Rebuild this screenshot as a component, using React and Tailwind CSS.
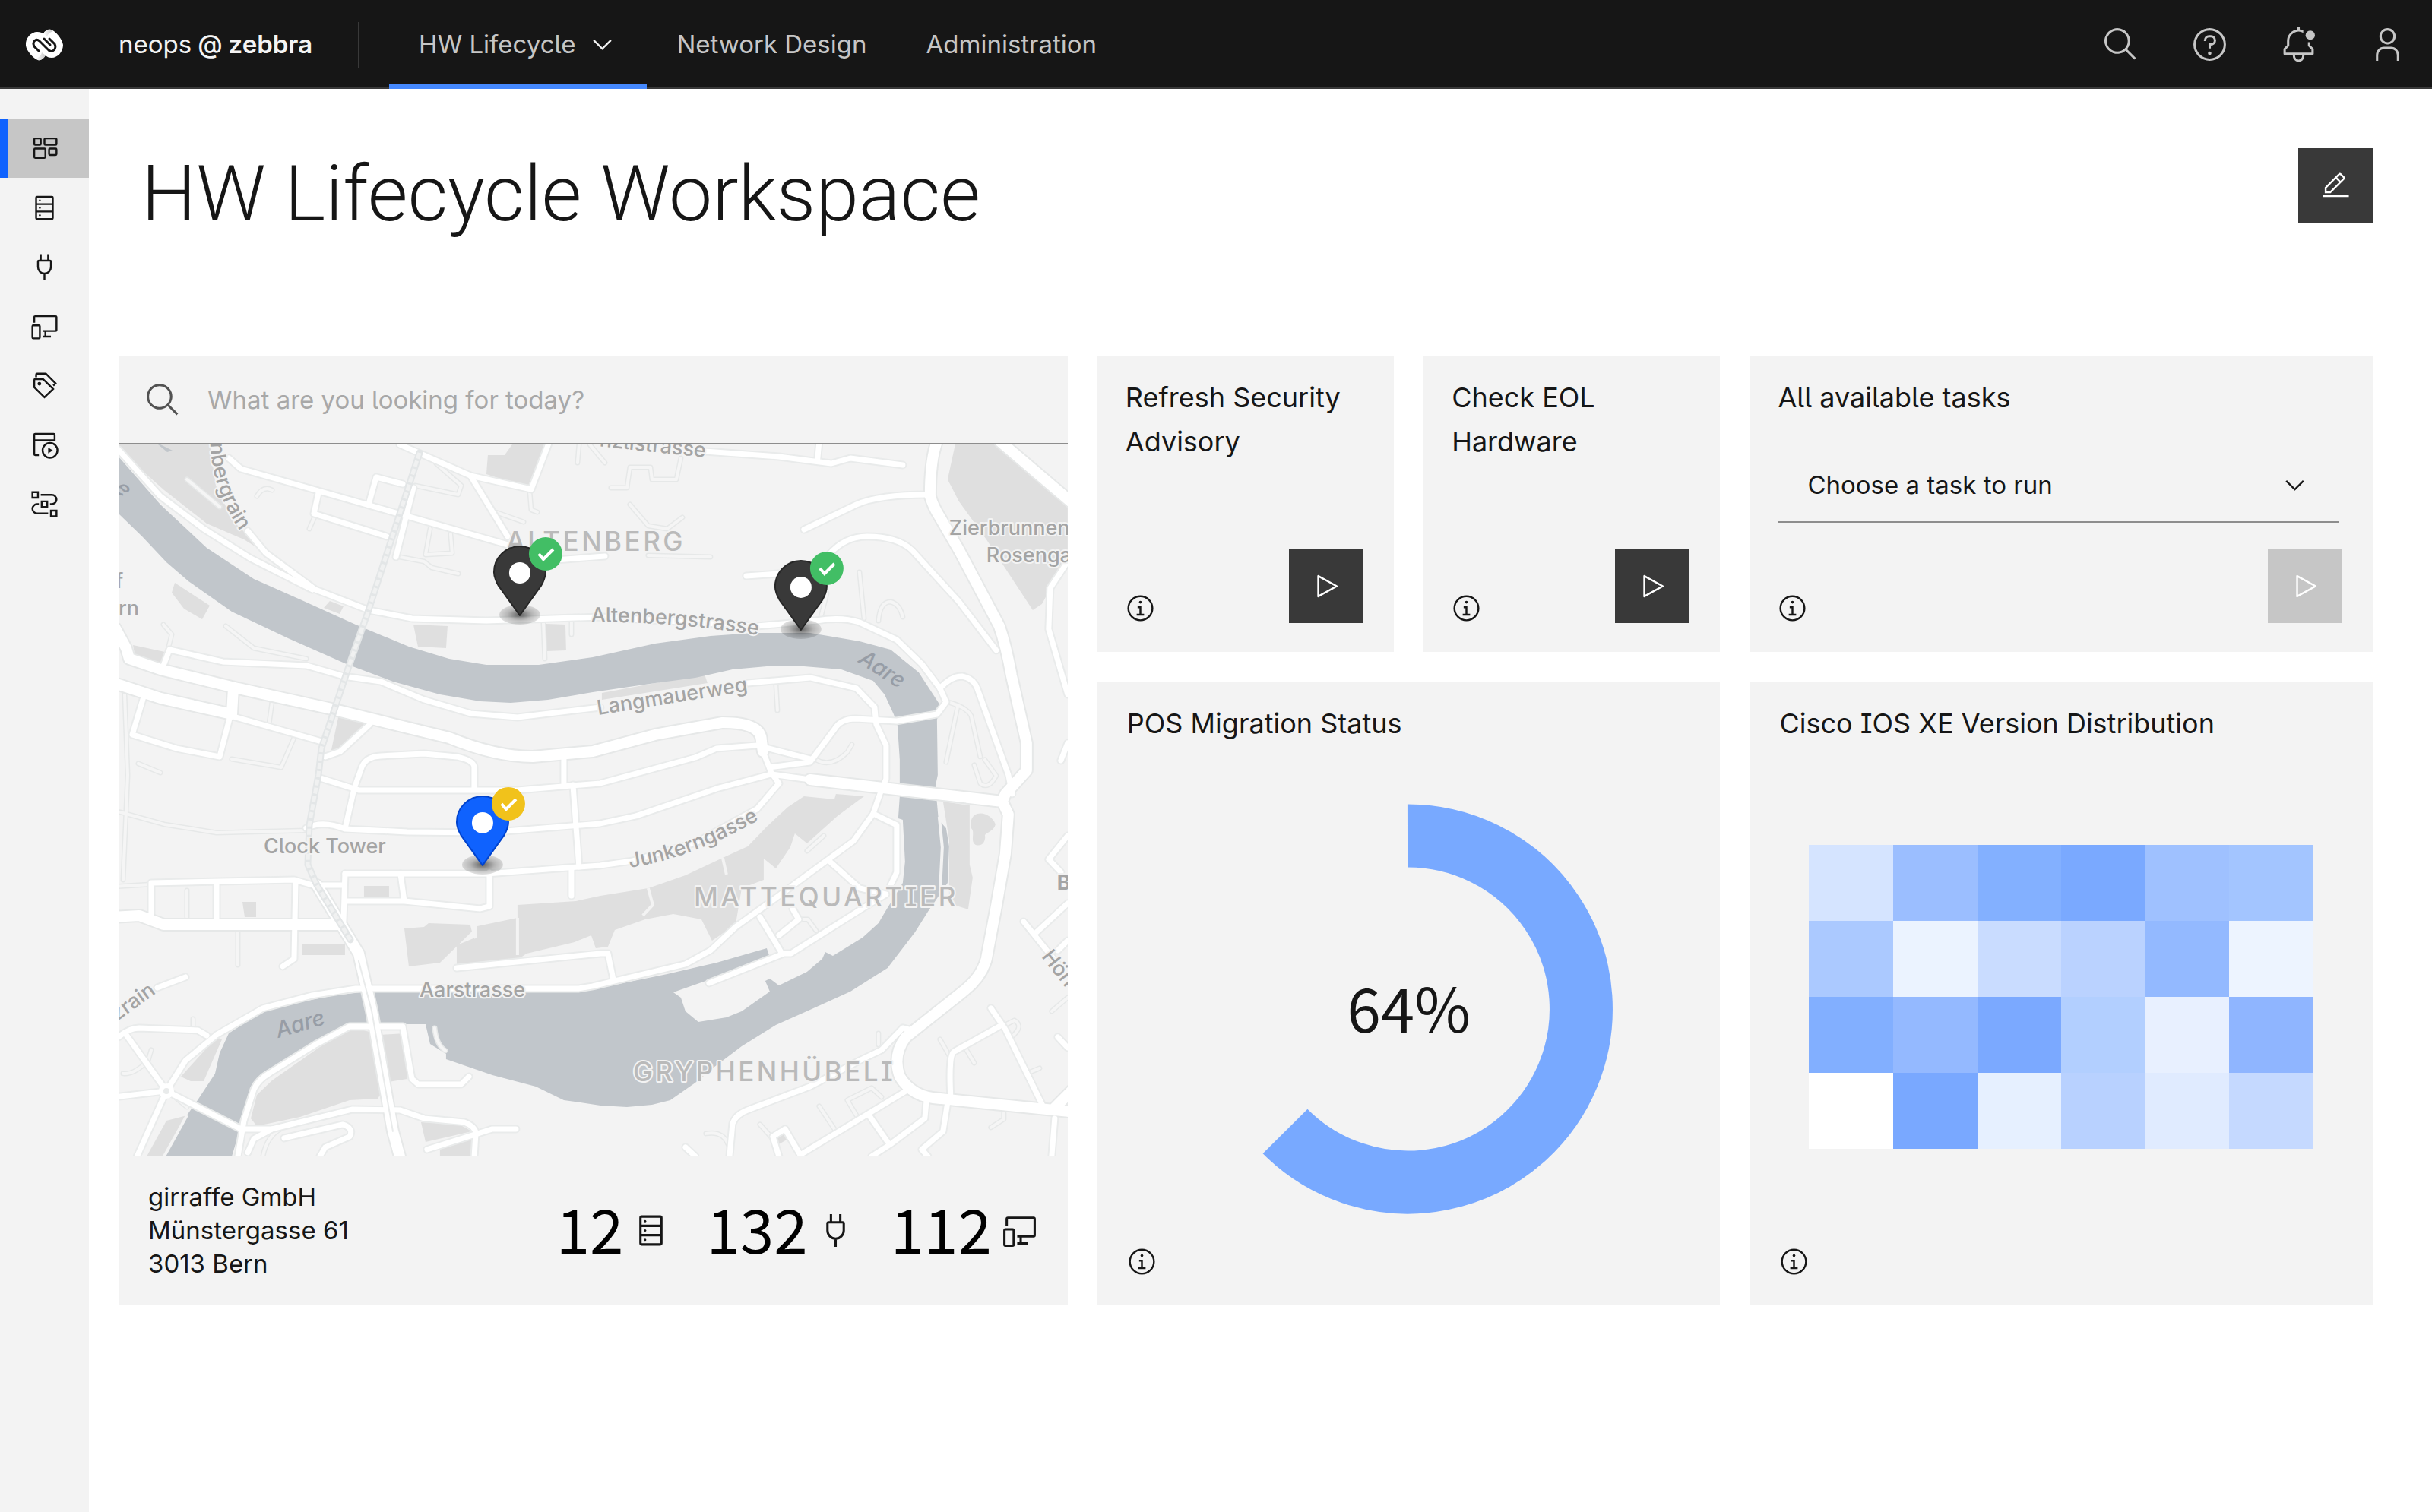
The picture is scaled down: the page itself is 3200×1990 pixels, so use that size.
import React, { useState } from 'react';

// ====================================================================
// 1. Icons (32 x 32 grid)
// ====================================================================
const Icon = ({ className, children }) => (
    <svg viewBox="0 0 32 32" className={className} fill="currentColor" aria-hidden="true">
        {children}
    </svg>
);

const SearchIcon = (props) => (
    <Icon {...props}>
        <path d="M29,27.586l-7.552-7.552a11.018,11.018,0,1,0-1.414,1.414L27.586,29ZM4,13a9,9,0,1,1,9,9A9.01,9.01,0,0,1,4,13Z" />
    </Icon>
);

const HelpIcon = (props) => (
    <Icon {...props}>
        <path d="M16,2A14,14,0,1,0,30,16,14,14,0,0,0,16,2Zm0,26A12,12,0,1,1,28,16,12,12,0,0,1,16,28Z" />
        <circle cx="16" cy="23.5" r="1.5" />
        <path d="M17,8H15.5A4.49,4.49,0,0,0,11,12.5V13h2v-.5A2.5,2.5,0,0,1,15.5,10H17a2.5,2.5,0,0,1,0,5H15v4.5h2V17a4.5,4.5,0,0,0,0-9Z" />
    </Icon>
);

const BellIcon = (props) => (
    <Icon {...props}>
        <path d="M28.707,19.293,26,16.586V14H24v3a1,1,0,0,0,.293.707L27,20.414V23H5V20.414l2.707-2.707A1,1,0,0,0,8,17V13a7.985,7.985,0,0,1,12-6.9V3.848a9.896,9.896,0,0,0-3-.797V1H15V3.051A10.014,10.014,0,0,0,6,13v3.586L3.293,19.293A1,1,0,0,0,3,20v4a1,1,0,0,0,1,1h7v.777a5.152,5.152,0,0,0,4.5,5.199A5.006,5.006,0,0,0,21,26V25h7a1,1,0,0,0,1-1V20A1,1,0,0,0,28.707,19.293ZM19,26a3,3,0,0,1-6,0V25h6Z" />
        <circle cx="26" cy="8" r="4" />
    </Icon>
);

const UserIcon = (props) => (
    <Icon {...props}>
        <path d="M16,4a5,5,0,1,1-5,5,5,5,0,0,1,5-5m0-2a7,7,0,1,0,7,7A7,7,0,0,0,16,2Z" />
        <path d="M26,30H24V25a5,5,0,0,0-5-5H13a5,5,0,0,0-5,5v5H6V25a7,7,0,0,1,7-7h6a7,7,0,0,1,7,7Z" />
    </Icon>
);

const ChevronIcon = (props) => (
    <Icon {...props}>
        <path d="M16,22 6,12 7.4,10.6 16,19.2 24.6,10.6 26,12Z" />
    </Icon>
);

const EditIcon = (props) => (
    <Icon {...props}>
        <path d="M2,26h28v2H2Z" />
        <path d="M25.4,9c.8-.8.8-2,0-2.8L21.8,2.6c-.8-.8-2-.8-2.8,0L4,17.6V24H10.4ZM20.4,4,24,7.6l-3,3L17.4,7ZM6,22V18.4L16,8.4,19.6,12l-10,10Z" />
    </Icon>
);

const PlayIcon = (props) => (
    <Icon {...props}>
        <path d="M7,28a1,1,0,0,1-1-1V5a1,1,0,0,1,1.482-.876l20,11a1,1,0,0,1,0,1.752l-20,11A1,1,0,0,1,7,28ZM8,6.691V25.309L24.925,16Z" />
    </Icon>
);

const InfoIcon = (props) => (
    <Icon {...props}>
        <path d="M17,22V14H13v2h2v6H12v2h8V22Z" />
        <circle cx="16" cy="9.5" r="1.5" />
        <path d="M16,30A14,14,0,1,1,30,16,14,14,0,0,1,16,30ZM16,4A12,12,0,1,0,28,16,12,12,0,0,0,16,4Z" />
    </Icon>
);

const WorkspaceIcon = (props) => (
    <Icon {...props}>
        <g fill="none" stroke="currentColor" strokeWidth="2">
            <rect x="5" y="5" width="7" height="7" rx="1" />
            <rect x="16" y="5" width="13" height="7" rx="1" />
            <rect x="5" y="16" width="12" height="10" rx="1" />
            <rect x="21" y="16" width="8" height="7" rx="1" />
        </g>
    </Icon>
);

const ServerIcon = (props) => (
    <Icon {...props}>
        <path d="M24,3H8A2,2,0,0,0,6,5V27a2,2,0,0,0,2,2H24a2,2,0,0,0,2-2V5A2,2,0,0,0,24,3Zm0,2v6H8V5ZM8,19V13H24v6Zm0,8V21H24v6Z" />
        <circle cx="11" cy="8" r="1" />
        <circle cx="11" cy="16" r="1" />
        <circle cx="11" cy="24" r="1" />
    </Icon>
);

const PlugIcon = (props) => (
    <Icon {...props}>
        <path
            fill="none"
            stroke="currentColor"
            strokeWidth="2"
            d="M12,2V9M20,2V9M10,9H22a1,1,0,0,1,1,1v6a7,7,0,0,1-14,0V10a1,1,0,0,1,1-1ZM16,23v7"
        />
    </Icon>
);

const DevicesIcon = (props) => (
    <Icon {...props}>
        <path d="M10,30H4a2,2,0,0,1-2-2V16a2,2,0,0,1,2-2h6a2,2,0,0,1,2,2V28A2,2,0,0,1,10,30ZM4,16V28h6V16Z" />
        <path d="M28,4H6A2,2,0,0,0,4,6v6H6V6H28V20H14v2h2v4H14v2h9V26H18V22H28a2,2,0,0,0,2-2V6A2,2,0,0,0,28,4Z" />
    </Icon>
);

const TagsIcon = (props) => (
    <Icon {...props}>
        <path
            fill="none"
            stroke="currentColor"
            strokeWidth="2"
            d="M6,9h8.5L25.4,19.6 16,28.6 5,17.8V10a1,1,0,0,1,1-1ZM7,7V4A1,1,0,0,1,8,3h9.5L28,13.6 25.5,16"
        />
        <circle cx="10.5" cy="14" r="2" />
    </Icon>
);

const RunTaskIcon = (props) => (
    <Icon {...props}>
        <path
            fill="none"
            stroke="currentColor"
            strokeWidth="2"
            d="M10,27H6a1,1,0,0,1-1-1V5A1,1,0,0,1,6,4H26a1,1,0,0,1,1,1v6H5"
        />
        <circle cx="22" cy="22" r="8" fill="none" stroke="currentColor" strokeWidth="2" />
        <path d="M20,18.8v6.4L25,22Z" />
    </Icon>
);

const FlowIcon = (props) => (
    <Icon {...props}>
        <g fill="none" stroke="currentColor" strokeWidth="2">
            <path d="M3,3h6v6H3ZM13,13h6v6H13ZM23,23h6v6H23Z" />
            <path d="M12,6H24a5,5,0,0,1,0,10H22M10,16H8A5,5,0,0,0,8,26H20" />
        </g>
    </Icon>
);

const Logo = () => (
    <svg viewBox="0 0 51 42" className="h-[42px] w-[51px]" aria-hidden="true">
        <defs>
            <linearGradient id="tail" x1="0" y1="0" x2="1" y2="0">
                <stop offset="0" stopColor="#fff" />
                <stop offset="1" stopColor="#c4c4c4" />
            </linearGradient>
        </defs>
        <path fill="#fff" d="M17 41C11 39 2 29 1 22C0 12 8 4 16 4C20 4 22 5 24 6C27 2 30 0 34 1C40 3 49 13 50 21C50 30 43 38 35 38C31 38 29 37 27 35C24 39 21 42 17 41Z" />
        <path fill="url(#tail)" d="M24 6C27 2 30 0 34 1L37 3C32 5 30 7 29 10Z" />
        <path fill="url(#tail)" d="M27 35C24 39 21 42 17 41L14 39C19 37 21 35 22 31Z" />
        <path
            fill="none"
            stroke="#161616"
            strokeWidth="3"
            strokeLinecap="round"
            d="M18 29L12 23C9 17 14 12 19 16L31 28C36 32 42 26 39 20L32 13M25 13L33 21"
        />
    </svg>
);

// ====================================================================
// 2. Header and side navigation
// ====================================================================
const HEADER_ACTIONS = [
    { label: 'Search', icon: SearchIcon },
    { label: 'Help', icon: HelpIcon },
    { label: 'Notifications', icon: BellIcon },
    { label: 'Account', icon: UserIcon },
];

const Header = () => (
    <header className="flex h-[117px] items-stretch bg-[#161616] text-[33px] text-[#c6c6c6] shadow-[inset_0_-2px_0_#393939]">
        <div className="flex w-[117px] items-center justify-center">
            <Logo />
        </div>
        <div className="flex items-center gap-2 pl-[39px] text-[#f4f4f4]">
            <span>neops</span>
            <span className="font-medium">@</span>
            <span className="font-semibold">zebbra</span>
        </div>
        <div className="ml-[60px] h-[60px] w-[2px] self-center bg-[#393939]" />
        <nav className="ml-[39px] flex items-stretch">
            <a href="#lifecycle" className="flex items-center gap-4 border-b-[7px] border-[#4589ff] px-[39px] pt-[7px]">
                HW Lifecycle
                <ChevronIcon className="size-[39px] text-[#f4f4f4]" />
            </a>
            <a href="#network" className="flex items-center px-[39px]">Network Design</a>
            <a href="#administration" className="flex items-center px-[39px]">Administration</a>
        </nav>
        <div className="ml-auto flex">
            {HEADER_ACTIONS.map(({ label, icon: ActionIcon }) => (
                <button key={label} type="button" aria-label={label} className="flex w-[117px] items-center justify-center">
                    <ActionIcon className="size-[49px]" />
                </button>
            ))}
        </div>
    </header>
);

const SIDE_ITEMS = [
    { id: 'workspace', label: 'Workspace', icon: WorkspaceIcon },
    { id: 'servers', label: 'Servers', icon: ServerIcon },
    { id: 'interfaces', label: 'Interfaces', icon: PlugIcon },
    { id: 'devices', label: 'Devices', icon: DevicesIcon },
    { id: 'tags', label: 'Tags', icon: TagsIcon },
    { id: 'tasks', label: 'Tasks', icon: RunTaskIcon },
    { id: 'flows', label: 'Flows', icon: FlowIcon },
];

const SideNav = () => {
    const [active, setActive] = useState('workspace');

    return (
        <nav className="w-[117px] shrink-0 bg-[#f3f3f3] pt-[39px]">
            {SIDE_ITEMS.map(({ id, label, icon: ItemIcon }) => (
                <button
                    key={id}
                    type="button"
                    aria-label={label}
                    onClick={() => setActive(id)}
                    className={`flex h-[78px] w-full items-center justify-center border-l-[10px] pr-[10px] ${active === id
                        ? 'border-[#0f62fe] bg-[#c6c6c6]'
                        : 'border-transparent'
                    }`}
                >
                    <ItemIcon className="size-[39px]" />
                </button>
            ))}
        </nav>
    );
};

// ====================================================================
// 3. City map
// ====================================================================
const RIVER = 'M0 16L55 79L116 136L178 177L239 204L312 237L382 266L435 282L484 290L553 290L624 280L706 262L779 252L836 248L910 248L975 259L1016 270L1053 300L1083 346L1077 362L1078 435L1075 449L1079 494L1089 505L1093 529L1091 577L1065 615L1048 642L1012 689L963 720L910 744L865 764L820 792L783 820L759 840L726 863L702 869L669 872L634 870L586 863L549 845L492 830L431 809L431 802L410 789L404 763L378 763L300 766L255 794L190 835L174 856L161 897L149 937L59 937L80 897L104 863L127 828L133 801L145 775L174 756L190 746L239 734L284 725L320 721L394 721L624 717L722 697L787 682L853 663L857 675L787 701L730 721L740 728L746 746L763 760L800 754L820 746L857 720L851 706L857 703L869 712L906 694L926 677L930 668L940 673L979 649L1000 630L1010 613L1026 587L1032 577L1035 549L1032 494L1026 492L1028 463L1028 415L1025 370L1020 355L1008 329L993 311L951 296L902 292L853 292L808 296L759 307L706 314L624 326L565 336L516 340L476 338L423 329L361 312L300 289L223 255L149 220L92 180L63 155L31 121L0 91ZM55 0L71 8L64 10L52 0Z';

const PARKS = [
    'M0 0L120 0L128 54L150 100L194 143L165 125L116 104L60 60L0 7Z',
    'M74 182L120 212L110 230L86 216L70 195Z',
    'M270 215L278 206L296 213L291 223Z',
    'M388 237L433 239L431 268L394 266Z',
    'M563 236L588 237L589 271L563 272Z',
    'M486 14L508 14L518 0L569 0L543 59L484 39Z',
    'M19 264L61 273L55 291L22 280Z',
    'M636 327L771 302L775 314L636 336Z',
    'M290 355L331 368L292 404L280 402Z',
    'M1101 0L1159 0L1249 82L1249 150L1215 210L1203 218L1142 125L1106 75L1091 46Z',
    'M323 581H356V596H323Z',
    'M163 602H181V622H166Z',
    'M242 658H298V672H242Z',
    'M376 637L402 635L408 630L463 632L465 641L423 682L382 687Z',
    'M472 634L525 623L525 606L602 601L634 594L697 584L746 567L795 544L828 529L853 503L881 477L902 463L942 467L944 460L981 463L946 489L906 525L890 512L884 530L865 558L849 545L849 573L820 584L812 632L781 653L767 625L730 618L693 625L653 639L644 661L628 663L622 646L600 655L537 670L525 678L445 685L445 659L472 648Z',
    'M1085 470L1120 475L1120 553L1124 570L1118 612L1093 604L1093 520Z',
    'M1122 495C1126 480 1148 484 1154 500C1152 508 1144 510 1140 514C1142 522 1136 530 1128 527C1120 522 1128 510 1122 505Z',
    'M304 766L345 777L378 775L380 835L355 839L341 861L304 863L239 885L182 897L174 887L182 856L202 837L259 797Z',
    'M129 780L136 783L112 838L95 838L82 832Z',
    'M63 890L90 883L59 937L37 937Z',
    'M398 892L447 894L465 904L404 918Z',
    'M423 925L465 914L463 937H423Z',
    'M863 911L873 906L881 914L869 921Z',
];

const MAIN_ROADS = [
    'M-4 242L10 268L14 282L55 296L157 321L280 348L361 368L435 386Q496 411 545 411L624 404L706 382L795 366Q846 366 846 390L848 404',
    'M-6 314L55 334L149 355L151 321',
    'M1077 -4Q1068 20 1068 68Q1072 82 1081 96L1106 139L1159 239Q1168 265 1175 304L1195 393V429L1167 460L1163 470L1171 487L1167 539L1155 608L1142 677Q1136 700 1114 718L1036 780Q1018 804 1028 832Q1045 860 1081 861L1249 878',
    'M910 441L1032 455L1163 470',
    'M1160 -4L1255 77',
    'M-6 622L27 620L59 632L290 632',
    'M261 580L316 670L333 745L361 904L370 937',
    'M1232 873L1255 850',
];

const STREETS = [
    'M0 7L55 68L112 111L174 150L255 191',
    'M170 114L194 143L259 191L329 218L386 229L484 232L634 227L840 239L918 232Q950 226 975 234L1024 257L1057 289L1081 321',
    'M145 18L161 32L263 61L512 132',
    'M263 64L257 91L353 121',
    'M329 79L339 43L374 52',
    'M388 57L365 148',
    'M370 0L463 41L543 59L567 -4',
    'M463 41L512 121',
    'M575 152L640 147',
    'M771 9L869 16L938 25L963 18L1032 27',
    'M922 -4L920 18',
    'M902 112L971 79Q1000 66 1065 66',
    'M934 146Q955 121 985 121Q1025 121 1044 139L1106 207L1155 271',
    'M826 173L869 170',
    'M1249 154L1226 189L1224 243L1249 329',
    'M1081 321Q1095 305 1110 305Q1125 308 1130 321L1171 435L1176 460',
    'M857 425L910 418L942 375Q950 361 970 361L1024 364L1077 355L1089 339L1081 321',
    'M828 314L910 307L971 321L995 346L997 368L1010 396V440L1002 460L993 486L967 522L869 594L812 635L779 666L746 684L624 713L606 716H312L255 725L190 742L129 777L88 811L63 851L23 940',
    'M59 291L67 270L137 286L247 291L296 305L345 312L402 336L463 354L525 359L634 346',
    'M33 332L18 382L76 400L133 411L147 357L267 391',
    'M331 368L292 404L272 411',
    'M310 453L320 425Q325 411 345 410L402 407L445 411Q468 416 468 425V453',
    'M265 439L316 455H525L634 446L759 412L787 400L840 396L910 414',
    'M310 453L298 506M247 505Q268 494 298 506L380 510L484 511L634 499L681 489L787 453L859 434L910 441',
    'M298 565H484L634 554L677 548L760 524L840 480L869 446L859 432L848 404',
    'M298 565L296 628M371 565L376 601M298 601H376L476 611L488 608V563',
    'M586 408V448M598 448L606 556M596 560V594',
    'M43 577L231 573L255 580H296M43 577V622M129 579V625M233 577L231 677L216 687',
    'M445 689L634 670H644L651 704',
    'M-6 859L63 851L161 901H202L308 875L370 876L402 887L455 892Q470 898 470 907L468 940',
    'M10 777L63 851M0 780Q14 768 27 768L104 771L116 778M51 715L88 701',
    'M157 937L165 890L178 849Q184 836 198 828L259 790L304 766H374L386 835L394 842H451L461 832',
    'M218 913L295 895Q310 900 304 911L272 925L265 937M170 932L178 914L202 901',
    'M406 928L492 901H523',
    'M936 549L975 584L1010 592L983 608L885 670H873L863 653L844 622',
    'M869 646L895 625L887 611M873 671L777 709',
    'M993 486L1024 501V563L1016 580',
    'M804 937L808 894Q812 882 828 876L910 845L975 811L1004 797L1032 768L1044 771',
    'M1036 851L897 935L877 901L861 911L869 937M987 882L1012 918',
    'M1063 866L1061 887L1016 921L991 937M1091 866L1085 904L1057 928L1065 937',
    'M1095 859Q1092 801 1100 799L1159 766M1148 742L1167 770L1216 870',
    'M1232 887L1228 937M1236 780L1249 794M746 925L759 937',
    'M1249 515L1224 546L1240 563M1249 604L1208 642M1191 628L1236 684M1249 653L1236 666M1240 416L1249 393',
];

const LANES = [
    'M90 46L133 82M182 68Q190 54 202 60M251 111L259 93',
    'M390 54L447 66L451 54L418 25M370 148L402 154L412 162L447 170',
    'M410 111L404 145L439 143L437 118M541 61L543 86L551 89M496 89L533 102',
    'M141 239L178 268L247 282M559 232L561 282M596 232V250M59 237L70 250L65 270',
    'M648 57L669 57L673 30H700L702 46H734L740 18M673 79L697 107L722 111L742 96',
    'M975 168L981 229M924 228L932 196M1000 232Q1002 207 1016 207Q1028 210 1032 227',
    'M1091 339Q1115 345 1122 357L1134 411M1104 346L1089 418M865 314L867 350',
    'M697 146L779 148M606 0L604 24M620 0L640 24',
    'M8 329L12 435L6 573M231 386L214 425L149 414M202 339L198 368M26 420L55 432',
    'M2 484L60 500L129 511L247 508M157 639V685M90 587V622M-6 582L43 579',
    'M43 797L39 811Q20 830 6 828M98 756V770M190 937Q195 910 215 900',
    'M971 883L959 863L991 847L1004 859M922 871L942 901M1081 783L1093 804M1114 794L1126 814',
    'M1195 828L1212 821M1175 780Q1192 766 1179 758L1163 766M1148 899L1165 888V880',
    'M773 907Q795 903 802 921M844 895L861 914M1000 775V790M906 535L928 515M1228 746L1249 728',
    'M1126 422L1134 446Q1145 455 1155 436L1140 415M918 415Q938 426 959 405L965 395',
    'M67 853L90 872M416 768Q418 790 430 798M895 625H907L918 640',
];

// x / y is the tip of the pin
const PINS = [
    { x: 528, y: 225, fill: '#393939', edge: '#262626', badge: '#42be65' },
    { x: 898, y: 244, fill: '#393939', edge: '#262626', badge: '#42be65' },
    { x: 479, y: 554, fill: '#0f62fe', edge: '#0043ce', badge: '#f1c21b' },
];

const MapPin = ({ x, y, fill, edge, badge }) => (
    <g transform={`translate(${x} ${y})`}>
        <ellipse cx="0" cy="-1" rx="27" ry="13" fill="url(#pinShadow)" />
        <path d="M0 0L-28 -39C-32 -46 -34 -52 -34 -57A34 34 0 0 1 34 -57C34 -52 32 -46 28 -39Z" fill={fill} stroke={edge} strokeWidth="2" strokeLinejoin="round" />
        <circle cx="0" cy="-56" r="14" fill="#fff" />
        <circle cx="34" cy="-81" r="22" fill={badge} />
        <path d="M25 -81L31 -74L44 -87" fill="none" stroke="#fff" strokeWidth="4" />
    </g>
);

const CityMap = () => (
    <svg viewBox="0 0 1249 937" className="block w-full bg-[#f3f3f3]" role="img" aria-label="Map of Bern">
        <defs>
            <radialGradient id="pinShadow">
                <stop offset="0" stopColor="#000" stopOpacity="0.6" />
                <stop offset="0.6" stopColor="#000" stopOpacity="0.25" />
                <stop offset="1" stopColor="#000" stopOpacity="0.12" />
            </radialGradient>
            <path id="bergrain" d="M121 -2Q122 66 172 130" />
            <path id="altenbergstrasse" d="M622 234Q730 232 860 254" />
            <path id="junkerngasse" d="M673 557Q760 544 860 484" />
        </defs>

        {PARKS.map((d) => <path key={d} d={d} fill="#dfdfdf" />)}
        <path d={RIVER} fill="#c1c6cb" />
        <path d="M465 632L470 650M525 623V672M697 584L703 606L690 620M795 544L800 566M1080 490L1084 530L1081 590M90 883L60 937" fill="none" stroke="#f3f3f3" strokeWidth="4" />

        <g fill="none" strokeLinecap="round" strokeLinejoin="round">
            {LANES.map((d) => <path key={d} d={d} stroke="#e6e8e8" strokeWidth="7" />)}
            {LANES.map((d) => <path key={d} d={d} stroke="#f5f5f5" strokeWidth="4" />)}
            {STREETS.map((d) => <path key={d} d={d} stroke="#e9ebeb" strokeWidth="11" />)}
            {MAIN_ROADS.map((d) => <path key={d} d={d} stroke="#e6e8e8" strokeWidth="18" />)}
            {STREETS.map((d) => <path key={d} d={d} stroke="#fff" strokeWidth="7" />)}
            {MAIN_ROADS.map((d) => <path key={d} d={d} stroke="#fff" strokeWidth="14" />)}
            <path d="M316 680L333 745L361 904" stroke="#e9ebeb" strokeWidth="2" />
            <path d="M396 11L329 218L304 289L267 400L263 435L251 501L249 553L261 580L305 652" stroke="#e3e6e7" strokeWidth="9" />
            <path d="M396 11L329 218L304 289L267 400L263 435L251 501L249 553L261 580L305 652" stroke="#f0f1f1" strokeWidth="5" strokeLinecap="butt" strokeDasharray="8 3" />
            <circle cx="63" cy="851" r="7" stroke="#fff" strokeWidth="6" fill="#e9ebeb" />
        </g>

        <g className="text-[27px] font-medium" fill="#a4a4a4" stroke="#f3f3f3" strokeWidth="4" strokeLinejoin="round" paintOrder="stroke">
            <text x="191" y="538">Clock Tower</text>
            <text x="396" y="727">Aarstrasse</text>
            <text x="1093" y="119">Zierbrunnen</text>
            <text x="1142" y="155">Rosengarten</text>
            <text x="-4" y="189">f</text>
            <text x="0" y="225">rn</text>
            <text x="1235" y="586" className="font-bold">B</text>
            <text transform="translate(772 17) rotate(6)" textAnchor="end">nzlistrasse</text>
            <text transform="translate(631 356) rotate(-9)">Langmauerweg</text>
            <text transform="translate(1214 674) rotate(52)">Hön</text>
            <text transform="translate(-8 764) rotate(-36)">lzrain</text>
            <text><textPath href="#bergrain">nbergrain</textPath></text>
            <text><textPath href="#altenbergstrasse">Altenbergstrasse</textPath></text>
            <text><textPath href="#junkerngasse">Junkerngasse</textPath></text>
        </g>
        <g className="text-[29px] font-medium italic" fill="#979da6">
            <text transform="translate(972 286) rotate(33)">Aare</text>
            <text transform="translate(210 781) rotate(-16)">Aare</text>
            <text transform="translate(-6 58) rotate(50)">e</text>
        </g>
        <g className="text-[35px] font-medium tracking-widest" fill="#bababa" stroke="#f3f3f3" strokeWidth="4" strokeLinejoin="round" paintOrder="stroke">
            <text x="510" y="140">ALTENBERG</text>
            <text x="757" y="608">MATTEQUARTIER</text>
            <text x="677" y="838">GRYPHENHÜBELI</text>
        </g>

        {PINS.map((pin) => <MapPin key={pin.x} {...pin} />)}
    </svg>
);

// ====================================================================
// 4. Location panel
// ====================================================================
const STATS = [
    { value: 12, label: 'Servers', icon: ServerIcon },
    { value: 132, label: 'Interfaces', icon: PlugIcon },
    { value: 112, label: 'Devices', icon: DevicesIcon },
];

const LocationPanel = () => (
    <section className="col-span-3 row-span-2 bg-[#f3f3f3]">
        <label className="flex h-[117px] items-center gap-[34px] px-[34px] shadow-[inset_0_-2px_0_#8d8d8d]">
            <SearchIcon className="size-[49px] shrink-0 text-[#525252]" />
            <input
                type="search"
                aria-label="Search"
                placeholder="What are you looking for today?"
                className="w-full bg-transparent text-[33px] outline-none placeholder:text-[#a8a8a8]"
            />
        </label>
        <CityMap />
        <div className="flex h-[195px] items-center justify-between px-[39px]">
            <address className="text-[33px] leading-[44px] not-italic">
                girraffe GmbH<br />
                Münstergasse 61<br />
                3013 Bern
            </address>
            <div className="flex items-center gap-[48px]">
                {STATS.map(({ value, label, icon: StatIcon }) => (
                    <div key={label} title={label} className="flex items-center gap-3">
                        <span className="pb-2 font-['Noto_Sans_CJK_JP',sans-serif] text-[80px] leading-[80px] text-black">{value}</span>
                        <StatIcon className="size-[49px]" />
                    </div>
                ))}
            </div>
        </div>
    </section>
);

// ====================================================================
// 5. Task cards
// ====================================================================
const InfoButton = () => (
    <button type="button" aria-label="More information">
        <InfoIcon className="size-[39px]" />
    </button>
);

const RunButton = ({ disabled }) => (
    <button
        type="button"
        aria-label="Run task"
        disabled={disabled}
        className="flex size-[98px] items-center justify-center bg-[#393939] text-white disabled:bg-[#c6c6c6]"
    >
        <PlayIcon className="size-[39px]" />
    </button>
);

const TaskCard = ({ title, className, disabled, children }) => (
    <section className={`flex min-h-[390px] flex-col bg-[#f3f3f3] pt-[26px] pr-[40px] pb-[38px] pl-[37px] ${className}`}>
        <h2 className="text-[36px] leading-[58px]">{title}</h2>
        {children}
        <div className="mt-auto flex items-end justify-between">
            <InfoButton />
            <RunButton disabled={disabled} />
        </div>
    </section>
);

const TaskSelect = ({ value, onChange }) => (
    <div className="relative mt-[38px] mr-1">
        <select
            aria-label="Task"
            value={value}
            onChange={(e) => onChange(e.target.value)}
            className="h-[98px] w-full appearance-none bg-transparent pl-[39px] text-[33px] shadow-[inset_0_-2px_0_#8d8d8d] outline-none"
        >
            <option value="">Choose a task to run</option>
            <option value="advisory">Refresh Security Advisory</option>
            <option value="eol">Check EOL Hardware</option>
        </select>
        <ChevronIcon className="pointer-events-none absolute top-[29px] right-[39px] size-[39px]" />
    </div>
);

// ====================================================================
// 6. Chart cards
// ====================================================================
const ChartCard = ({ title, children }) => (
    <section className="col-span-2 flex min-h-[820px] flex-col bg-[#f3f3f3] px-[39px] pt-[26px] pb-[37px]">
        <h2 className="text-[36px] leading-[58px]">{title}</h2>
        {children}
        <div className="mt-auto flex">
            <InfoButton />
        </div>
    </section>
);

const DonutChart = () => (
    <div className="mt-[77px] grid place-items-center">
        <svg viewBox="0 0 540 540" className="col-start-1 row-start-1 size-[540px]" aria-hidden="true">
            <path d="M268 42A228 228 0 1 1 107 431" fill="none" stroke="#78a9ff" strokeWidth="83" />
        </svg>
        <span className="col-start-1 row-start-1 pb-2 font-['Noto_Sans_CJK_JP',sans-serif] text-[80px] leading-[80px]">64%</span>
    </div>
);

const HEATMAP = [
    'bg-[#d5e4ff]', 'bg-[#9bbeff]', 'bg-[#83b0ff]', 'bg-[#7aa9ff]', 'bg-[#9fc1ff]', 'bg-[#a3c5ff]',
    'bg-[#abc9ff]', 'bg-[#ebf3ff]', 'bg-[#c9dcff]', 'bg-[#bad2ff]', 'bg-[#93b9ff]', 'bg-[#edf4ff]',
    'bg-[#82afff]', 'bg-[#94b9ff]', 'bg-[#7ba9ff]', 'bg-[#b2cfff]', 'bg-[#e8f0ff]', 'bg-[#8fb5ff]',
    'bg-[#ffffff]', 'bg-[#79a8ff]', 'bg-[#e6f0ff]', 'bg-[#b8d1ff]', 'bg-[#e0ebff]', 'bg-[#c5d9ff]',
];

const Heatmap = () => (
    <div className="mx-[39px] mt-[131px] grid grid-cols-6">
        {HEATMAP.map((color, i) => <div key={i} className={`h-[100px] ${color}`} />)}
    </div>
);

// ====================================================================
// 7. Page
// ====================================================================
const App = () => {
    const [task, setTask] = useState('');

    return (
        <div className="flex min-h-screen flex-col bg-white font-['Inter',sans-serif] text-[#161616] [font-feature-settings:'cv05','cv08']">
            <Header />
            <div className="flex flex-1">
                <SideNav />
                <main className="flex-1 pt-[78px] pr-[78px] pb-[78px] pl-[39px]">
                    <div className="flex items-start justify-between">
                        <h1 className="pl-[30px] font-['Roboto',sans-serif] text-[102px] leading-[120px] font-light">HW Lifecycle Workspace</h1>
                        <button type="button" aria-label="Edit workspace" className="flex size-[98px] items-center justify-center bg-[#393939] text-white">
                            <EditIcon className="size-[39px]" />
                        </button>
                    </div>
                    <div className="mt-[153px] grid grid-cols-7 gap-[39px]">
                        <LocationPanel />
                        <TaskCard title="Refresh Security Advisory" className="col-span-1" />
                        <TaskCard title="Check EOL Hardware" className="col-span-1" />
                        <TaskCard title="All available tasks" className="col-span-2" disabled={!task}>
                            <TaskSelect value={task} onChange={setTask} />
                        </TaskCard>
                        <ChartCard title="POS Migration Status">
                            <DonutChart />
                        </ChartCard>
                        <ChartCard title="Cisco IOS XE Version Distribution">
                            <Heatmap />
                        </ChartCard>
                    </div>
                </main>
            </div>
        </div>
    );
};

export default App;
